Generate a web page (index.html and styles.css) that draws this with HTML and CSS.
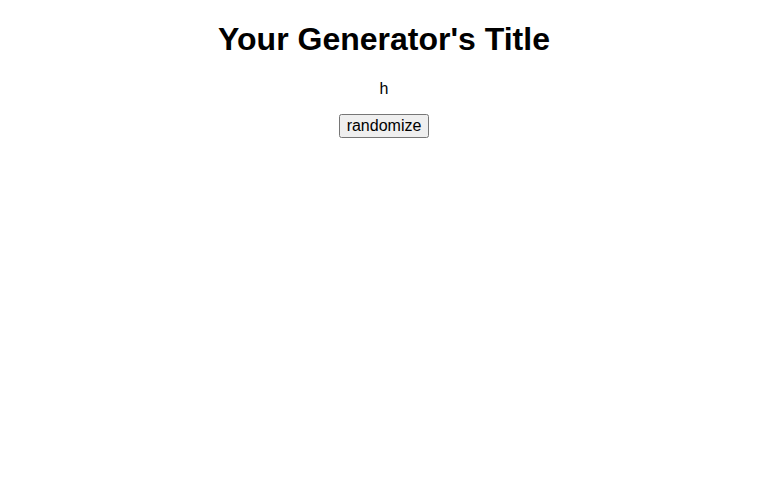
FILE: index.html
```html
<!DOCTYPE html>
<html lang="en">
<head>
    <meta charset="UTF-8">
    <meta name="viewport" content="width=device-width, initial-scale=1.0">
    <title>Generator</title>
    <link rel="stylesheet" href="styles.css">
</head>
<body>
    <div class="generator">
        <h1>Your Generator's Title</h1>
        <p class="output">h</p>
        <button class="randomize">randomize</button>
    </div>
</body>
</html>
```

FILE: styles.css
```css
body {
    margin: 0;
    font-family: "Liberation Sans", Arial, sans-serif;
    color: #000;
    background: #fff;
}
.generator {
    text-align: center;
}
.generator h1 {
    font-size: 32px;
}
.generator .output {
    font-size: 16px;
}
.generator .randomize {
    font-family: "Liberation Sans", Arial, sans-serif;
    font-size: 16px;
}
```
